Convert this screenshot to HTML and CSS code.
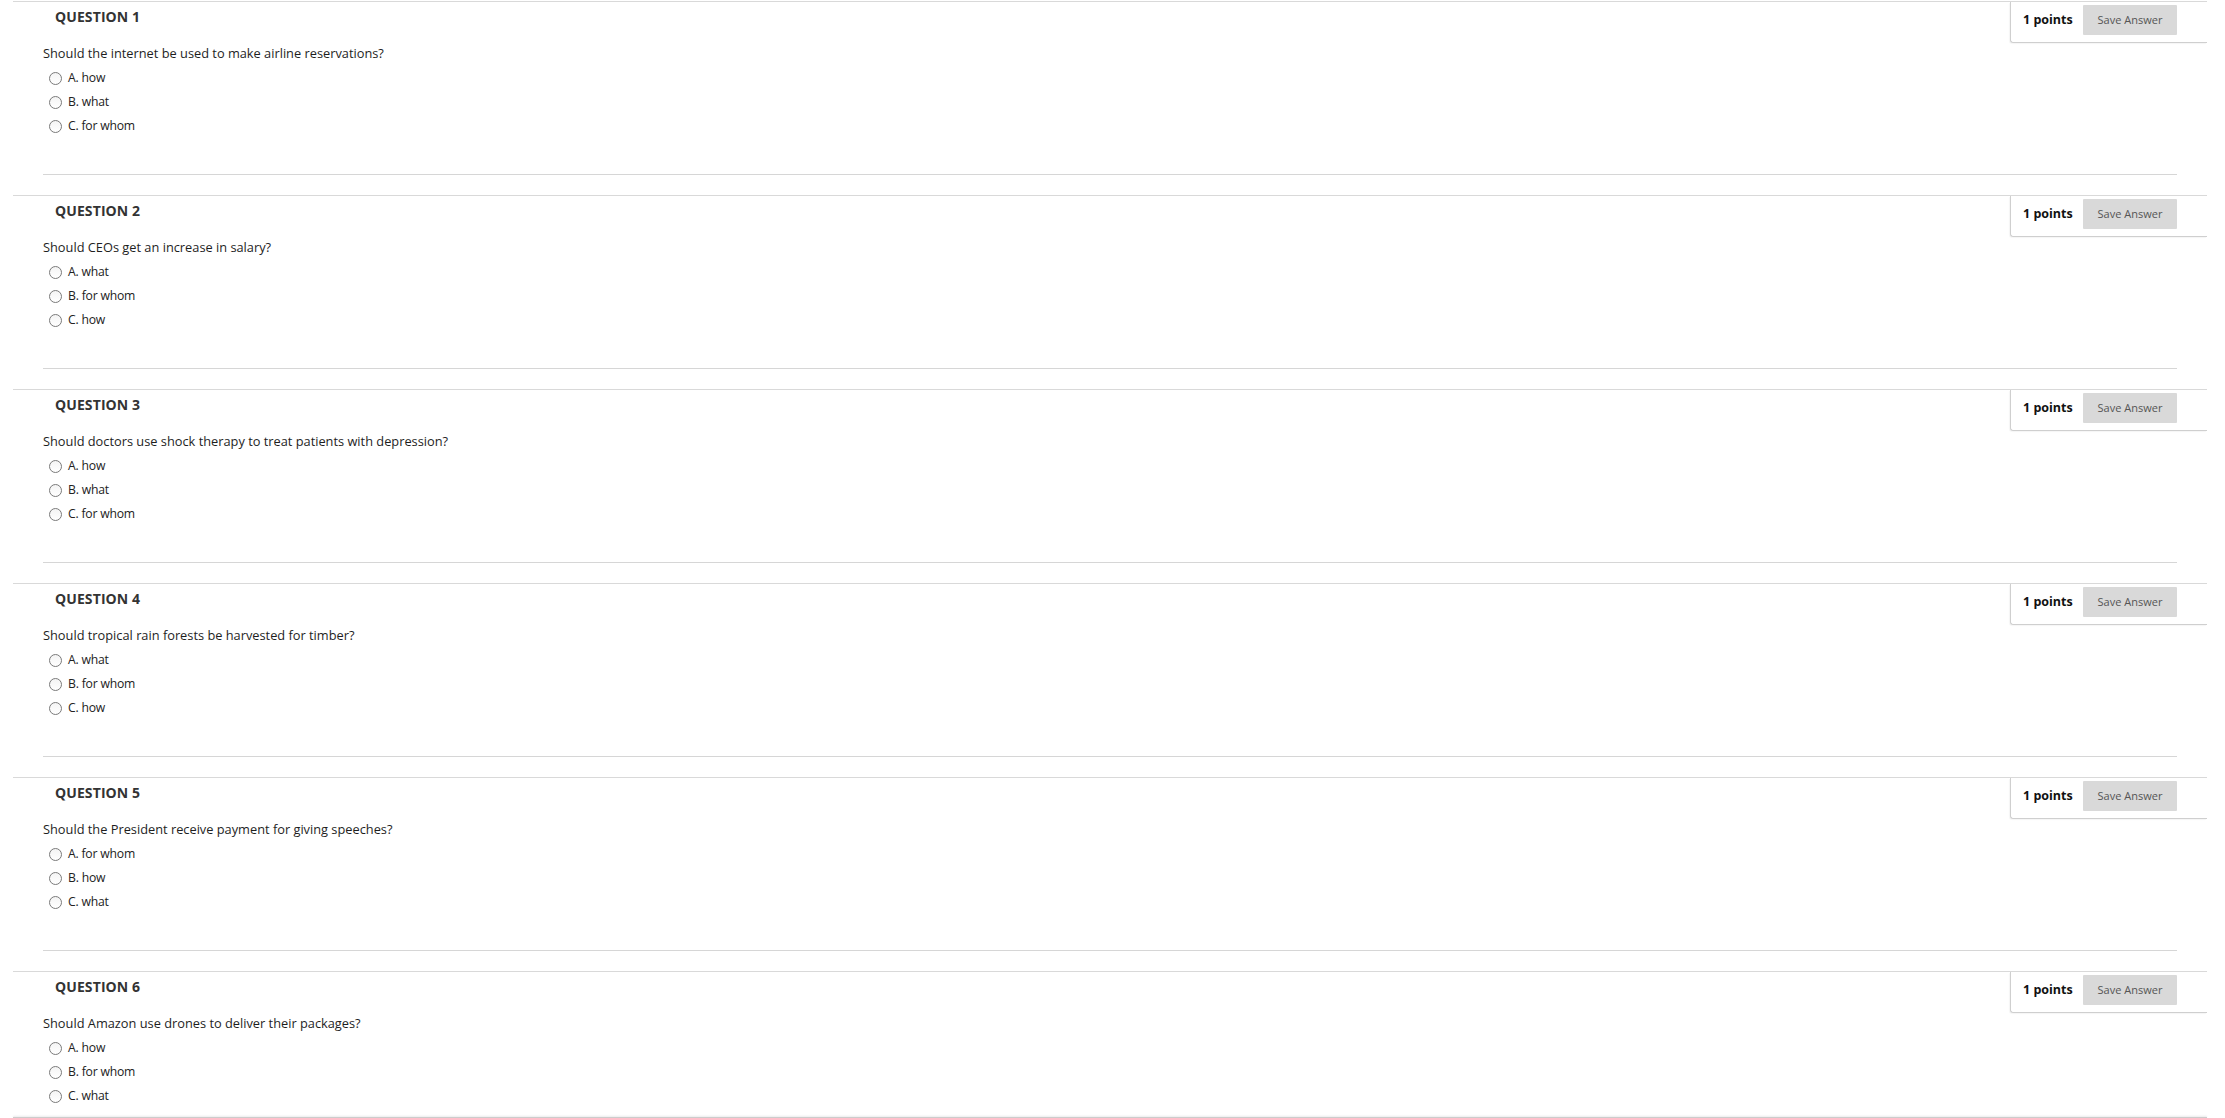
FILE: index.html
```html
<!DOCTYPE html>
<html lang="en">
<head>
<meta charset="utf-8">
<title>Quiz</title>
<link rel="stylesheet" href="styles.css">
</head>
<body>
<div class="page">

  <section class="question">
    <div class="q-head">
      <h3 class="q-title">QUESTION 1</h3>
      <div class="points-box"><span class="points">1 points</span><button class="save">Save Answer</button></div>
    </div>
    <div class="q-body">
      <p class="q-text">Should the internet be used to make airline reservations?</p>
      <ul class="options">
        <li class="option"><span class="radio"></span><span class="label">A. how</span></li>
        <li class="option"><span class="radio"></span><span class="label">B. what</span></li>
        <li class="option"><span class="radio"></span><span class="label">C. for whom</span></li>
      </ul>
    </div>
  </section>

  <section class="question">
    <div class="q-head">
      <h3 class="q-title">QUESTION 2</h3>
      <div class="points-box"><span class="points">1 points</span><button class="save">Save Answer</button></div>
    </div>
    <div class="q-body">
      <p class="q-text">Should CEOs get an increase in salary?</p>
      <ul class="options">
        <li class="option"><span class="radio"></span><span class="label">A. what</span></li>
        <li class="option"><span class="radio"></span><span class="label">B. for whom</span></li>
        <li class="option"><span class="radio"></span><span class="label">C. how</span></li>
      </ul>
    </div>
  </section>

  <section class="question">
    <div class="q-head">
      <h3 class="q-title">QUESTION 3</h3>
      <div class="points-box"><span class="points">1 points</span><button class="save">Save Answer</button></div>
    </div>
    <div class="q-body">
      <p class="q-text">Should doctors use shock therapy to treat patients with depression?</p>
      <ul class="options">
        <li class="option"><span class="radio"></span><span class="label">A. how</span></li>
        <li class="option"><span class="radio"></span><span class="label">B. what</span></li>
        <li class="option"><span class="radio"></span><span class="label">C. for whom</span></li>
      </ul>
    </div>
  </section>

  <section class="question">
    <div class="q-head">
      <h3 class="q-title">QUESTION 4</h3>
      <div class="points-box"><span class="points">1 points</span><button class="save">Save Answer</button></div>
    </div>
    <div class="q-body">
      <p class="q-text">Should tropical rain forests be harvested for timber?</p>
      <ul class="options">
        <li class="option"><span class="radio"></span><span class="label">A. what</span></li>
        <li class="option"><span class="radio"></span><span class="label">B. for whom</span></li>
        <li class="option"><span class="radio"></span><span class="label">C. how</span></li>
      </ul>
    </div>
  </section>

  <section class="question">
    <div class="q-head">
      <h3 class="q-title">QUESTION 5</h3>
      <div class="points-box"><span class="points">1 points</span><button class="save">Save Answer</button></div>
    </div>
    <div class="q-body">
      <p class="q-text">Should the President receive payment for giving speeches?</p>
      <ul class="options">
        <li class="option"><span class="radio"></span><span class="label">A. for whom</span></li>
        <li class="option"><span class="radio"></span><span class="label">B. how</span></li>
        <li class="option"><span class="radio"></span><span class="label">C. what</span></li>
      </ul>
    </div>
  </section>

  <section class="question">
    <div class="q-head">
      <h3 class="q-title">QUESTION 6</h3>
      <div class="points-box"><span class="points">1 points</span><button class="save">Save Answer</button></div>
    </div>
    <div class="q-body">
      <p class="q-text">Should Amazon use drones to deliver their packages?</p>
      <ul class="options">
        <li class="option"><span class="radio"></span><span class="label">A. how</span></li>
        <li class="option"><span class="radio"></span><span class="label">B. for whom</span></li>
        <li class="option"><span class="radio"></span><span class="label">C. what</span></li>
      </ul>
    </div>
  </section>

</div>
<div class="bottom-bar"></div>
</body>
</html>
```

FILE: styles.css
```css
html, body {
  margin: 0;
  padding: 0;
  background: #ffffff;
}

body {
  font-family: "Open Sans", "Liberation Sans", sans-serif;
  color: #222222;
  overflow: hidden;
}

.page {
  padding: 1px 18px 0 13px;
}

.question {
  border-top: 1px solid #d9d9d9;
  padding-bottom: 20px;
}

.q-head {
  display: flex;
  justify-content: space-between;
  align-items: flex-start;
  height: 41px;
}

.q-title {
  margin: 0;
  padding: 5px 0 0 42px;
  font-size: 14px;
  line-height: 20px;
  font-weight: 700;
  color: #333333;
  letter-spacing: 0.1px;
}

.points-box {
  box-sizing: border-box;
  height: 41px;
  width: 197px;
  display: flex;
  align-items: flex-start;
  padding: 3px 30px 0 12px;
  border-left: 1px solid #cfcfcf;
  border-bottom: 1px solid #cfcfcf;
  border-bottom-left-radius: 3px;
  box-shadow: -1px 1px 1px rgba(0, 0, 0, 0.04);
}

.points {
  font-size: 12.5px;
  font-weight: 700;
  color: #111111;
  line-height: 30px;
  width: 60px;
  white-space: nowrap;
}

.save {
  width: 94px;
  height: 30px;
  margin: 0;
  padding: 0;
  border: none;
  border-radius: 1px;
  background: #d9d9d9;
  color: #555555;
  font-family: "Open Sans", "Liberation Sans", sans-serif;
  font-size: 11px;
  line-height: 30px;
}

.q-body {
  box-sizing: border-box;
  height: 132px;
  margin: 0 30px;
  padding-top: 1px;
  border-bottom: 1px solid #d6d6d6;
}

.q-text {
  margin: 0;
  font-size: 12.8px;
  line-height: 18px;
  color: #1e1e1e;
}

.options {
  list-style: none;
  margin: 4px 0 0 0;
  padding: 0;
}

.option {
  display: flex;
  align-items: center;
  height: 24px;
}

.radio {
  box-sizing: border-box;
  width: 13px;
  height: 13px;
  margin-left: 6px;
  margin-right: 6px;
  border: 1px solid #7a7a7a;
  border-radius: 50%;
  background: linear-gradient(#f4f4f4, #ffffff);
  flex: none;
}

.label {
  font-size: 12.2px;
  line-height: 18px;
  color: #222222;
  letter-spacing: -0.2px;
}

.bottom-bar {
  position: fixed;
  left: 13px;
  right: 18px;
  bottom: 0;
  height: 1px;
  background: #cccccc;
  box-shadow: 0 -1px 2px rgba(0, 0, 0, 0.12);
}
```
